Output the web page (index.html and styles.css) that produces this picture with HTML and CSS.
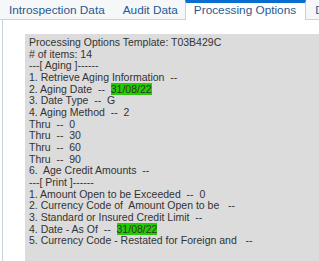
FILE: index.html
```html
<!DOCTYPE html>
<html lang="en">
<head>
  <meta charset="UTF-8" />
  <meta name="viewport" content="width=device-width, initial-scale=1.0" />
  <title>Processing Options</title>
  <link rel="stylesheet" href="styles.css">
</head>
<body>
  <div class="tab-bar">
    <div class="tab">Introspection Data</div>
    <div class="tab">Audit Data</div>
    <div class="tab active">Processing Options</div>
    <div class="tab">Diagnostics</div>
  </div>
  <div class="tab-body">
    <div class="po-panel">Processing Options Template: T03B429C
# of items: 14
---[ Aging ]------
1. Retrieve Aging Information  --
2. Aging Date  --  <span class="hl">31/08/22</span>
3. Date Type  --  G
4. Aging Method  --  2
Thru  --  0
Thru  --  30
Thru  --  60
Thru  --  90
6.  Age Credit Amounts  --
---[ Print ]------
1. Amount Open to be Exceeded  --  0
2. Currency Code of  Amount Open to be   --
3. Standard or Insured Credit Limit  --
4. Date - As Of  --  <span class="hl">31/08/22</span>
5. Currency Code - Restated for Foreign and   --</div>
  </div>
</body>
</html>
```

FILE: styles.css
```css
html, body {
  margin: 0;
  padding: 0;
  background-color: #fff;
  overflow: hidden;
}
body {
  font-family: "Liberation Sans", Arial, sans-serif;
  width: 319px;
  height: 261px;
}
.tab-bar {
  display: flex;
  white-space: nowrap;
  background-color: #f5f7f9;
  border-bottom: 1px solid #c9d2db;
  height: 19px;
}
.tab {
  font-size: 11.8px;
  line-height: 14px;
  color: #1f5a93;
  padding: 0 9px 2px;
  border-top: 3px solid transparent;
}
.tab.active {
  background-color: #fff;
  border-top-color: #0a6ed1;
  border-left: 1px solid #c9d2db;
  border-right: 1px solid #c9d2db;
  margin-left: -2px;
  padding: 0 9px 3px 8px;
  height: 14px;
}
.tab-body {
  margin-left: 2px;
  border-left: 1px solid #c9d2db;
  padding: 14px 0 0 22px;
  height: 240px;
}
.po-panel {
  background-color: #dcdcdc;
  color: #333;
  font-size: 10.5px;
  line-height: 11.66px;
  white-space: pre;
  padding: 3px 4px 20px;
  width: 400px;
}
.hl {
  background-color: #22cc00;
}
```
